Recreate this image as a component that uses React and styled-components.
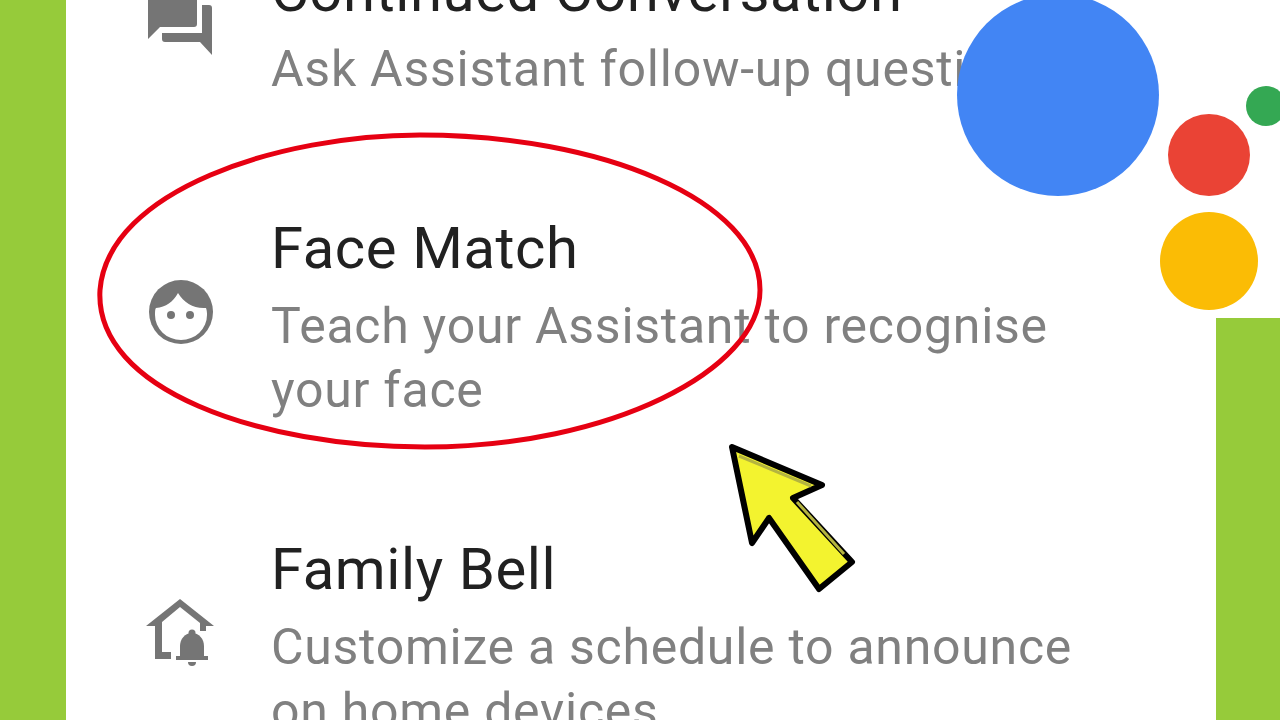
import React from 'react';
import styled, { createGlobalStyle } from 'styled-components';

const GlobalStyle = createGlobalStyle`
html, body {
  margin: 0;
  padding: 0;
  background: #fff;
  overflow: hidden;
}
`

const Page = styled.div`
position: relative;
display: grid;
grid-template-columns: 66px 1fr 64px;
width: 1280px;
height: 720px;
overflow: hidden;
font-family: Roboto, "Liberation Sans", sans-serif;
`
const LeftStrip = styled.div`
background: #96cb3a;
`
const RightStrip = styled.div`
background: #96cb3a;
margin-top: 318px;
`
const Panel = styled.div`
background: #fff;
overflow: hidden;
`
const SettingsList = styled.div`
display: flex;
flex-direction: column;
gap: 115px;
margin-top: -41px;
`
const Row = styled.div`
display: flex;
align-items: flex-start;
`
const IconSlot = styled.div`
flex: 0 0 206px;
padding-left: 82px;
padding-top: ${props => props.$top}px;
box-sizing: border-box;
svg {
  display: block;
  overflow: visible;
}
`
const RowText = styled.div`
flex: 1;
min-width: 0;
padding-right: 110px;
`
const Title = styled.div`
margin-left: -1px;
font-size: 58px;
line-height: 64px;
letter-spacing: 0.6px;
color: #212121;
white-space: nowrap;
`
const Subtitle = styled.div`
margin-top: 14px;
margin-left: -1px;
font-size: 50px;
line-height: 64px;
letter-spacing: 0.73px;
color: #808080;
`
const Logo = styled.svg`
position: absolute;
top: 0;
right: 0;
`
const Ring = styled.svg`
position: absolute;
top: 128px;
left: 92px;
`
const Pointer = styled.svg`
position: absolute;
top: 440px;
left: 724px;
`

const ChatIcon = () => (
    <svg width="66" height="56" viewBox="0 0 66 56" fill="#757575">
        <path d="M0 -4h49v28a3 3 0 0 1-3 3H12L0 39z" />
        <path d="M54 5h7a3 3 0 0 1 3 3v47L52 42H17a3 3 0 0 1-3-3v-6h40z" />
    </svg>
)

const FaceIcon = () => (
    <svg width="66" height="66" viewBox="0 0 66 66">
        <circle cx="33" cy="33" r="32" fill="#757575" />
        <path d="M7 36C7 33 7 30 8 29 C 18 28 25 23 30 14 C 36 24 46 30 58 29 C 59 32 59 34 59 36 A26 25 0 0 1 7 36Z" fill="#fff" />
        <circle cx="23" cy="36" r="4" fill="#757575" />
        <circle cx="42" cy="36" r="4" fill="#757575" />
    </svg>
)

const BellHomeIcon = () => (
    <svg width="70" height="70" viewBox="18 10 70 70" fill="#757575">
        <path d="M50 10L84 37H76V42H70V34L50 18L32 33V63H41V70H25V37H16z" />
        <circle cx="62" cy="44" r="3.5" />
        <path d="M62 44c-7 0-12 6-12 13v10h24v-10c0-7-5-13-12-13z" />
        <path d="M46 67h32v4H46z" />
        <path d="M58 73h8a4 4 0 0 1-8 0z" />
    </svg>
)

function App() {
    return (
        <>
            <GlobalStyle />
            <Page>
                <LeftStrip />
                <Panel>
                    <SettingsList>
                        <Row>
                            <IconSlot $top={41}><ChatIcon /></IconSlot>
                            <RowText>
                                <Title>Continued Conversation</Title>
                                <Subtitle>Ask Assistant follow-up questions</Subtitle>
                            </RowText>
                        </Row>
                        <Row>
                            <IconSlot $top={63}><FaceIcon /></IconSlot>
                            <RowText>
                                <Title>Face Match</Title>
                                <Subtitle>Teach your Assistant to recognise your face</Subtitle>
                            </RowText>
                        </Row>
                        <Row>
                            <IconSlot $top={62}><BellHomeIcon /></IconSlot>
                            <RowText>
                                <Title>Family Bell</Title>
                                <Subtitle>Customize a schedule to announce on home devices</Subtitle>
                            </RowText>
                        </Row>
                    </SettingsList>
                </Panel>
                <RightStrip />

                <Logo width="330" height="320" viewBox="950 0 330 320">
                    <circle cx="1058" cy="95" r="101" fill="#4285f4" />
                    <circle cx="1209" cy="155" r="41" fill="#ea4335" />
                    <circle cx="1209" cy="261" r="49" fill="#fbbc05" />
                    <circle cx="1266" cy="106" r="20" fill="#34a853" />
                </Logo>
                <Ring width="680" height="330" viewBox="92 128 680 330">
                    <path d="M100 290C108 190 280 135 420 135C600 135 760 200 760 290C760 370 610 447 425 447C260 447 94 390 100 290Z" fill="none" stroke="#e60012" strokeWidth="5" />
                </Ring>
                <Pointer width="140" height="160" viewBox="724 440 140 160">
                    <path d="M732 447L822 485L793 498L852 562L819 589L769 518L752 543Z" fill="#f3f32f" stroke="#000" strokeWidth="6" strokeLinejoin="round" />
                    <path d="M739 456L811 486M797 502L844 554" fill="none" stroke="#b4b440" strokeWidth="3" />
                </Pointer>
            </Page>
        </>
    )
}

export default App
